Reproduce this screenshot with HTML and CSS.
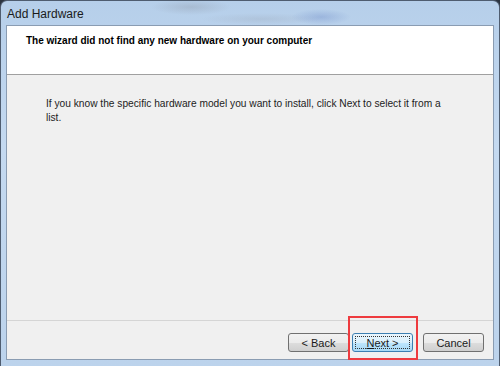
FILE: index.html
```html
<!DOCTYPE html>
<html lang="en">
<head>
    <meta charset="UTF-8">
    <title>Add Hardware</title>
    <link rel="stylesheet" href="styles.css">
</head>
<body>
    <div class="window">
        <div class="title-bar">Add Hardware</div>
        <div class="client">
            <div class="header">
                <h1>The wizard did not find any new hardware on your computer</h1>
            </div>
            <div class="content">
                <p>If you know the specific hardware model you want to install, click Next to select it from a list.</p>
            </div>
            <div class="footer">
                <button class="btn">&lt; Back</button>
                <button class="btn btn-default"><span class="focus"><u>N</u>ext &gt;</span></button>
                <button class="btn btn-cancel">Cancel</button>
            </div>
        </div>
        <div class="highlight"></div>
    </div>
</body>
</html>
```

FILE: styles.css
```css
body {
    margin: 0;
    padding: 0;
    background-color: #2b3440;
    font-family: 'Liberation Sans', Arial, sans-serif;
    color: #000;
}
.window {
    position: relative;
    width: 500px;
    height: 366px;
    box-sizing: border-box;
    border: 1px solid #4f5d70;
    border-bottom: none;
    border-radius: 7px 7px 0 0;
    background:
        radial-gradient(ellipse 40px 8px at 190px 6px, rgba(140, 150, 165, 0.35), transparent),
        radial-gradient(ellipse 30px 8px at 320px 16px, rgba(90, 120, 190, 0.3), transparent),
        radial-gradient(ellipse 60px 6px at 260px 18px, rgba(150, 160, 175, 0.25), transparent),
        linear-gradient(to bottom, #b6cfea 0%, #c4d9f0 40%, #bcd3ec 100%);
    padding: 0 5px;
    display: flex;
    flex-direction: column;
}
.title-bar {
    height: 24px;
    line-height: 27px;
    padding-left: 1px;
    font-size: 12px;
    color: #1a1a1a;
}
.client {
    height: 333px;
    border: 1px solid #8a9cb2;
    background-color: #f0f0f0;
    display: flex;
    flex-direction: column;
}
.header {
    height: 49px;
    box-sizing: border-box;
    background-color: #fff;
    border-bottom: 1px solid #a0a0a0;
}
.header h1 {
    margin: 0;
    padding: 9px 0 0 19px;
    font-size: 10px;
    font-weight: bold;
    line-height: 12px;
}
.content {
    flex: 1;
    padding: 22px 0 0 39px;
}
.content p {
    margin: 0;
    width: 400px;
    font-size: 10.2px;
    line-height: 14px;
    color: #1c1c1c;
}
.footer {
    height: 39px;
    box-sizing: border-box;
    border-top: 1px solid #d5d5d5;
    padding: 12px 9px 0 0;
    display: flex;
    justify-content: flex-end;
    align-items: flex-start;
}
.btn {
    width: 61px;
    height: 19px;
    padding: 0;
    margin: 0 0 0 3px;
    border: 1px solid #707070;
    border-radius: 3px;
    background: linear-gradient(to bottom, #f2f2f2 0%, #ebebeb 50%, #dddddd 51%, #cfcfcf 100%);
    font-family: 'Liberation Sans', Arial, sans-serif;
    font-size: 11px;
    color: #1a1a1a;
    display: flex;
    align-items: center;
    justify-content: center;
}
.btn-default {
    border-color: #3c7fb1;
    background: linear-gradient(to bottom, #eaf6fd 0%, #d9f0fc 50%, #bee6fd 51%, #a7d9f5 100%);
    padding: 2px;
}
.btn-default .focus {
    width: 100%;
    height: 100%;
    border: 1px dotted #333;
    box-sizing: border-box;
    display: flex;
    align-items: center;
    justify-content: center;
}
.btn-cancel {
    margin-left: 10px;
}
/* red annotation box over the Next button */
.highlight {
    position: absolute;
    left: 347px;
    top: 315px;
    width: 66px;
    height: 40px;
    border: 2px solid #ee3b3f;
}
```
